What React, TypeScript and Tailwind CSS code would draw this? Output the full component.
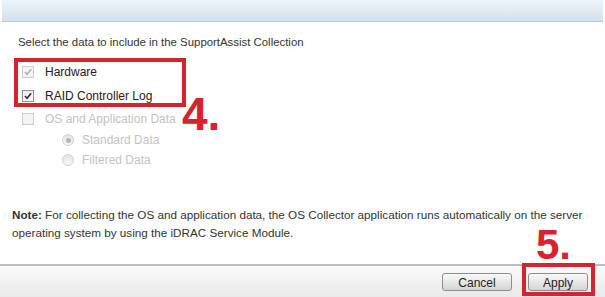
import { ReactNode } from 'react';

const Check = ({ checked, disabled }: { checked?: boolean; disabled?: boolean }) => (
  <span
    className={`flex h-[12px] w-[12px] items-center justify-center border ${
      disabled ? 'border-[#cdcdcd] bg-[#f4f4f4]' : 'border-[#8f8f8f] bg-gradient-to-b from-[#ececec] to-[#ffffff]'
    }`}
  >
    {checked && (
      <svg width="8" height="8" viewBox="0 0 9 9">
        <path
          d="M1 4.5 L3.5 7 L8 1.5"
          fill="none"
          stroke={disabled ? '#b0b0b0' : '#333'}
          strokeWidth="1.9"
        />
      </svg>
    )}
  </span>
);

const Radio = ({ checked }: { checked?: boolean }) => (
  <span className="flex h-[12px] w-[12px] items-center justify-center rounded-full border border-[#d2d2d2] bg-gradient-to-b from-[#e4e4e4] to-[#fafafa]">
    {checked && <span className="h-[5px] w-[5px] rounded-full bg-[#b5b5b5]" />}
  </span>
);

const Row = ({
  control,
  children,
  muted,
  h = 'h-[24px]',
  gap = 'gap-[11px]',
}: {
  control: ReactNode;
  children: ReactNode;
  muted?: boolean;
  h?: string;
  gap?: string;
}) => (
  <div className={`flex items-center ${h} ${gap} ${muted ? 'text-[#c3c3c3]' : 'text-[#222]'}`}>
    {control}
    <span>{children}</span>
  </div>
);

export default function App() {
  return (
    <div className="relative h-[297px] w-[605px] overflow-hidden bg-white font-['Liberation_Sans',Arial,sans-serif] text-[12px]">
      <div className="mx-[2px] h-[22px] border-b border-[#b9c8d3] bg-gradient-to-b from-[#eef4fa] to-[#d2e1ed]" />

      <div className="pl-[18px] pt-[12px] text-[11.4px] text-[#333]">
        Select the data to include in the SupportAssist Collection
      </div>

      <div className="pl-[22px] pt-[9px]">
        <Row control={<Check checked disabled />}>Hardware</Row>
        <Row control={<Check checked />}>RAID Controller Log</Row>
        <Row control={<Check disabled />} muted h="h-[22px]">
          OS and Application Data
        </Row>
        <div className="pl-[40px]">
          <Row control={<Radio checked />} muted h="h-[20px]" gap="gap-[8px]">
            Standard Data
          </Row>
          <Row control={<Radio />} muted h="h-[20px]" gap="gap-[8px]">
            Filtered Data
          </Row>
        </div>
      </div>

      <div className="pl-[12px] pt-[36px] text-[11.7px] leading-[18px] text-[#333]">
        <b>Note:</b> For collecting the OS and application data, the OS Collector application runs automatically on the server
        <br />
        operating system by using the iDRAC Service Module.
      </div>

      <div className="absolute inset-x-0 bottom-0 flex h-[33px] items-center justify-end gap-[16px] border-t-2 border-[#bdbdbd] bg-gradient-to-b from-[#fafafa] to-[#e9e9e9] pr-[17px]">
        <button className="h-[18px] w-[70px] rounded-[3px] border border-[#8e8e8e] bg-gradient-to-b from-[#fafafa] to-[#d4d4d4] text-[12px] text-[#222]">
          Cancel
        </button>
        <button className="h-[18px] w-[60px] rounded-[3px] border border-[#8e8e8e] bg-gradient-to-b from-[#fafafa] to-[#d4d4d4] text-[12px] text-[#222]">
          Apply
        </button>
      </div>

      {/* annotations */}
      <div className="absolute left-[14px] top-[58px] h-[49px] w-[172px] border-[4px] border-[#d8232e]" />
      <div className="absolute left-[182px] top-[91px] text-[46px] font-bold leading-none text-[#d8232e]">4.</div>
      <div className="absolute left-[522px] top-[263px] h-[33px] w-[73px] border-[4px] border-[#d8232e]" />
      <div className="absolute left-[536px] top-[224px] text-[42px] font-bold leading-none text-[#d8232e]">5.</div>
    </div>
  );
}
